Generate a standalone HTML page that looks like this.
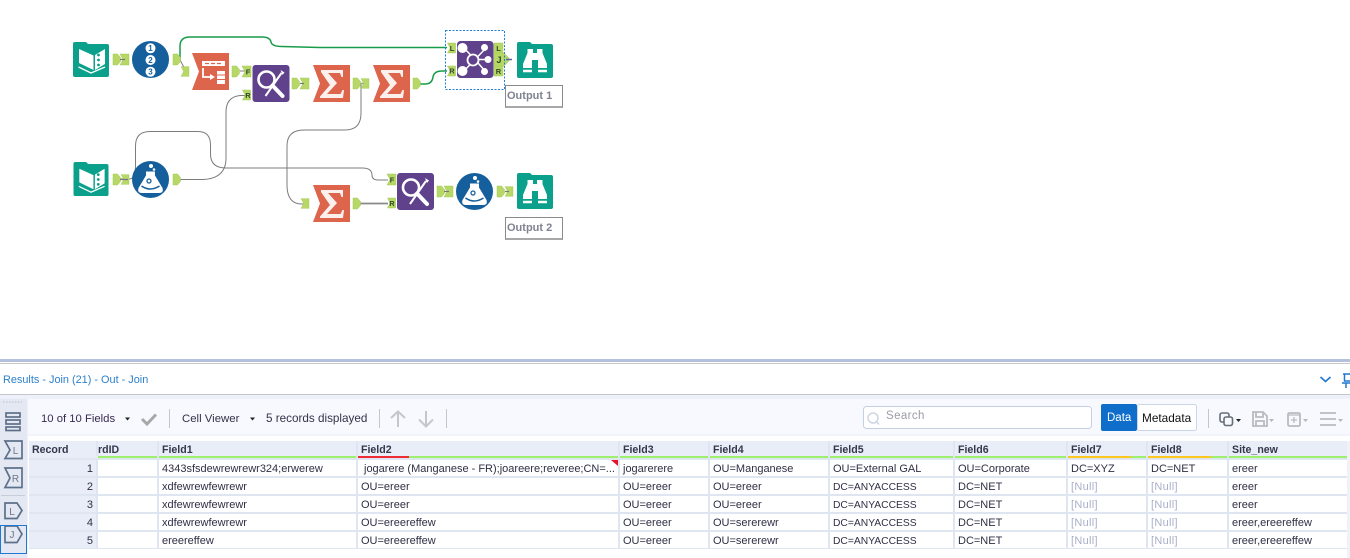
<!DOCTYPE html>
<html><head><meta charset="utf-8"><style>
html,body{margin:0;padding:0;background:#fff;width:1350px;height:558px;overflow:hidden;font-family:"Liberation Sans",sans-serif}
.a{position:absolute}
.t{position:absolute;white-space:nowrap;font-size:11.5px;color:#33334a;line-height:14px}
.c{position:absolute;height:16px;background:#fff;font-size:11px;line-height:19px;color:#2f2f45;white-space:nowrap;overflow:hidden;padding-left:3px;box-sizing:border-box}
.d{font-size:10.3px}
.h{position:absolute;top:441px;height:15px;background:#e9edf7;font-size:10.6px;font-weight:bold;line-height:19px;color:#33384c;white-space:nowrap;overflow:hidden;padding-left:3px;box-sizing:border-box}
.n{color:#a9afc8;letter-spacing:.3px}
.r{background:#e9edf7;text-align:right;padding-right:3px}
.g{position:absolute;top:456px;height:2px;background:#9df06e}
.y{position:absolute;top:456px;height:2px}
.lb{position:absolute;width:56px;height:20px;border:1px solid #8a8a8a;border-bottom:2px solid #a8a8a8;box-sizing:content-box;background:#fff;color:#7f8391;font-size:11px;font-weight:bold;line-height:20px;text-indent:1px;white-space:nowrap}
</style></head><body>
<svg class="a" style="left:0;top:0" width="1350" height="360" viewBox="0 0 1350 360">
<defs>
<symbol id="book" viewBox="0 0 36 36" overflow="visible"><path d="M2 0H13L15 2H34Q36 2 36 4V33Q36 35 34 35H2Q0 35 0 33V2Q0 0 2 0Z" fill="#0ba08b"/><path d="M6 7L20.500 13.500V28L6 21Z" fill="#fff"/><path d="M32 7L22 13V28L32 22Z" fill="#fff"/><path d="M5.500 25L18 31L32 25" fill="none" stroke="#fff" stroke-width="1.300"/><circle cx="25.500" cy="13" r="1.400" fill="#0ba08b"/><circle cx="25.500" cy="18" r="1.400" fill="#0ba08b"/><circle cx="25.500" cy="23" r="1.400" fill="#0ba08b"/></symbol>
<symbol id="bino" viewBox="0 0 36 36" overflow="visible"><path d="M2 0H13L15 2H34Q36 2 36 4V34Q36 36 34 36H2Q0 36 0 34V2Q0 0 2 0Z" fill="#0ba08b"/><path d="M10.500 7H16V11H20V7H25.500V11L30 22V26H21V18H15V26H6V22L10.500 11Z" fill="#fff"/><path d="M6 29H15M21 29H30" stroke="#fff" stroke-width="2.600"/></symbol>
<symbol id="sum" viewBox="0 0 37 37" overflow="visible"><path d="M0 0H37V37H0L7 18.500Z" fill="#dc654c"/><path d="M8 5H30V12H28.500L27 8H15L24 18L14 29H27.500L29.500 25H31L30 33H7V31.500L17 20L8 7Z" fill="#fff" opacity=".9"/></symbol>
<symbol id="filt" viewBox="0 0 37 37" overflow="visible"><rect width="37" height="37" rx="3" fill="#5f418c"/><circle cx="14" cy="14.500" r="8" fill="none" stroke="#fff" stroke-width="2.600"/><path d="M20 20.500L30 31" stroke="#fff" stroke-width="4" stroke-linecap="round"/><path d="M29 8L13 31" stroke="#fff" stroke-width="2"/><path d="M28 5L32 7.500L30 10Z" fill="#fff"/></symbol>
<symbol id="flask" viewBox="0 0 37 37" overflow="visible"><circle cx="18.500" cy="18.500" r="18.500" fill="#155f9c"/><path d="M14 10.500H23V14.500L30.500 27Q32 32 27 32H10Q5 32 6.500 27L14 14.500Z" fill="#fff"/><path d="M9.500 25Q18 31 27.500 25" fill="none" stroke="#155f9c" stroke-width="1.500"/><circle cx="17" cy="20" r="2" fill="none" stroke="#155f9c" stroke-width="1.300"/><circle cx="19" cy="5" r="2" fill="#fff"/><circle cx="22" cy="8.500" r="1.300" fill="#fff"/></symbol>
<symbol id="out" viewBox="0 0 8 11" overflow="visible"><path d="M0 0H4.500L7.500 3.500V7.500L4.500 11H0Z" fill="#b7d767" stroke="#a5c958" stroke-width=".5"/></symbol>
<symbol id="inp" viewBox="0 0 9 11" overflow="visible"><path d="M0 0H9V11H0L3 5.500Z" fill="#b7d767" stroke="#a5c958" stroke-width=".5"/></symbol>
</defs>
<!-- connectors -->
<g fill="none" stroke="#7c7c7c" stroke-width="1">
<path d="M180 60L186 71"/>
<path d="M240 71H245"/>
<path d="M180 179.500H202Q226 179 226 158V112Q226 97 240 95.500H245"/>
<path d="M120 179H130Q135.500 178 135.500 165V146Q135.500 131.500 150 131.500H198Q210.500 131.500 210.500 145V154Q210.500 168 226 168H362Q372 168 372 175Q372 180 378 180H388"/>
<path d="M361 84V113Q361 130 345 130H304Q287 130 287 146V185Q287 204 302 204H306"/>
<path d="M360 203.500H388" stroke="#8a8a8a" stroke-width="1.800"/>
<path d="M360 83.500H366" stroke="#999" stroke-width="1.500"/>
</g>
<g fill="none" stroke="#179c4a" stroke-width="1.500">
<path d="M180 60V46Q180 37 190 37H262Q270 37 271 42Q272 46.500 282 46.500Q300 47 320 47.500H447"/>
<path d="M420 84H425Q432 84 433 77Q434 71 442 71H447"/>
</g>
<!-- anchors -->
<use href="#out" x="113" y="54" width="8" height="11"/><use href="#inp" x="120" y="54" width="9" height="11"/>
<use href="#out" x="173" y="54" width="8" height="11"/><use href="#inp" x="181" y="66" width="8" height="11"/>
<use href="#out" x="232" y="66" width="8" height="11"/><use href="#inp" x="241" y="66" width="11" height="11"/><use href="#inp" x="241" y="90" width="11" height="10"/>
<use href="#out" x="292" y="78" width="8" height="11"/><use href="#inp" x="300" y="78" width="9" height="11"/>
<use href="#out" x="353" y="78" width="8" height="11"/><use href="#inp" x="361" y="78" width="8" height="11"/>
<use href="#out" x="413" y="78" width="8" height="11"/>
<use href="#inp" x="446" y="43" width="11" height="10"/><use href="#inp" x="446" y="66" width="11" height="10"/>
<path d="M494 43H503V53H494ZM494 66H503V76H494Z" fill="#b7d767" stroke="#a5c958" stroke-width=".5"/>
<path d="M494 53H504L509 58V61L504 66H494Z" fill="#b7d767" stroke="#a5c958" stroke-width=".5"/>
<path d="M506 59.500H512" stroke="#5a62a8" stroke-width="1.500"/>
<use href="#out" x="113" y="174" width="8" height="11"/><use href="#inp" x="121" y="174" width="8" height="11"/>
<use href="#out" x="173" y="174" width="8" height="11"/>
<use href="#inp" x="301" y="198" width="8" height="11"/><use href="#out" x="353" y="198" width="8" height="11"/>
<use href="#inp" x="386" y="174" width="11" height="11"/><use href="#inp" x="386" y="198" width="11" height="10"/>
<use href="#out" x="437" y="186" width="8" height="11"/><use href="#inp" x="444" y="186" width="9" height="11"/>
<use href="#out" x="497" y="186" width="8" height="11"/><use href="#inp" x="505" y="186" width="8" height="11"/>
<path d="M300 83.500H304M444 191.500H449M505 191.500H509M120 59.500H125M120 179.500H128" stroke="#777" stroke-width="1.200"/>
<!-- tools -->
<use href="#book" x="73" y="42" width="36" height="36"/>
<circle cx="150.500" cy="59.500" r="18.500" fill="#155f9c"/>
<g fill="#fff"><circle cx="150.500" cy="48.300" r="5"/><circle cx="150.500" cy="60" r="5"/><circle cx="150.500" cy="71.700" r="5"/></g>
<g fill="#155f9c" font-family="Liberation Sans" font-size="8" font-weight="bold" text-anchor="middle"><text x="150.500" y="51">1</text><text x="150.500" y="62.800">2</text><text x="150.500" y="74.500">3</text></g>
<path d="M192 53H229V90H192L199 71.500Z" fill="#dc654c"/>
<path d="M202 61H225V66H202Z" fill="#fff"/><path d="M205 63.500H209M211 63.500H215M217 63.500H221" stroke="#dc654c" stroke-width="1.300"/>
<path d="M203 68V77H211" fill="none" stroke="#fff" stroke-width="1.800"/><path d="M210 74L215 77L210 80Z" fill="#fff"/>
<path d="M217 71H225V84H217Z" fill="#fff"/><path d="M217 75H225M217 79.500H225" stroke="#dc654c" stroke-width="1.100"/>
<use href="#filt" x="252.500" y="65" width="37" height="37"/>
<use href="#sum" x="313" y="65" width="37" height="37"/>
<use href="#sum" x="373" y="65" width="37" height="37"/>
<rect x="457" y="41" width="36.500" height="37" rx="3.500" fill="#5f418c"/>
<g stroke="#fff" stroke-width="1.500"><path d="M463 47L475 59.500M487 47L475 59.500M463 72L475 59.500M485 71L475 59.500M490 59.500H475"/></g>
<circle cx="473" cy="60" r="5.500" fill="#5f418c" stroke="#fff" stroke-width="1.800"/>
<g fill="#fff"><circle cx="462.500" cy="48" r="5"/><circle cx="484.500" cy="47.500" r="3.500"/><circle cx="488" cy="59.500" r="3.500"/><circle cx="462.500" cy="71" r="5"/><circle cx="484.500" cy="71.500" r="3.500"/></g>
<rect x="445.500" y="30.500" width="59" height="59" fill="none" stroke="#1f7fd6" stroke-width="1" stroke-dasharray="2 1.500"/>
<use href="#bino" x="517" y="42" width="36" height="36"/>
<use href="#book" x="73" y="162" width="36" height="35"/>
<use href="#flask" x="132" y="161" width="37" height="37"/>
<use href="#sum" x="313" y="185" width="37" height="37"/>
<use href="#filt" x="397" y="173" width="37" height="37"/>
<use href="#flask" x="456" y="173" width="37" height="37"/>
<use href="#bino" x="517" y="173" width="36" height="36"/>
<g font-family="Liberation Sans" font-size="7.500" font-weight="bold" fill="#2c4a22" text-anchor="middle">
<text x="248" y="74.500">F</text><text x="248" y="98">R</text><text x="452" y="51">L</text><text x="452" y="73.500">R</text><text x="498.500" y="51">L</text><text x="499" y="62.800" font-size="9">J</text><text x="498.500" y="74">R</text><text x="392" y="182.500">F</text><text x="392" y="206">R</text>
</g>
</svg>
<div class="lb" style="left:505px;top:85px">Output 1</div>
<div class="lb" style="left:505px;top:217px">Output 2</div>

<!-- results panel -->
<div class="a" style="left:0;top:359px;width:1350px;height:3px;background:#b3c1de"></div>
<div class="a" style="left:0;top:363px;width:1350px;height:1px;background:#c8c8cc"></div>
<div class="t" style="left:3px;top:373px;color:#2c80cc;font-size:10.900px">Results - Join (21) - Out - Join</div>
<svg class="a" style="left:1318px;top:372px" width="32" height="16"><path d="M2.500 5L7.500 9.500L12.500 5" fill="none" stroke="#1f78d1" stroke-width="1.600"/><path d="M25 2H32M26.500 2V9H32M24 11H32M28 11V16" fill="none" stroke="#1f78d1" stroke-width="1.500"/></svg>
<div class="a" style="left:0;top:394px;width:1350px;height:1px;background:#c4c6cc"></div>
<div class="a" style="left:0;top:395px;width:1350px;height:163px;background:#eef1f9"></div>
<div class="a" style="left:28px;top:399px;width:1322px;height:35px;background:#f7f9fe"></div>
<div class="a" style="left:28px;top:434px;width:1322px;height:2px;background:#f2f4f9"></div>
<div class="a" style="left:0;top:399px;width:27px;height:159px;background:#e3e8f3"></div>
<div class="a" style="left:28px;top:436px;width:1322px;height:122px;background:#fff"></div>
<svg class="a" style="left:0;top:399px" width="27" height="159" viewBox="0 399 27 159">
<path d="M3 402H22" stroke="#c1c6d2" stroke-width="1.300" stroke-dasharray="1.500 1.500"/>
<g fill="none" stroke="#5d7089" stroke-width="1.700">
<rect x="6" y="413" width="14" height="4"/><rect x="6" y="420" width="14" height="4"/><rect x="6" y="427" width="14" height="3.500"/>
<path d="M5 441H22V458.500H5L10 450Z"/><path d="M5 468H22V487.500H5L10 478Z"/>
<path d="M5 503H17L22 510.500L17 518.500H5Z"/><path d="M5 526H17L22 534L17 542.500H5Z"/>
</g>
<path d="M1 495.500H25" stroke="#bfc4cf" stroke-width=".7"/>
<rect x="0.500" y="525.500" width="26" height="28" fill="none" stroke="#1f78d1" stroke-width="1"/>
<g font-family="Liberation Sans" font-size="10" fill="#6e7587" text-anchor="middle"><text x="15.500" y="454">L</text><text x="15.500" y="482">R</text><text x="12" y="515">L</text><text x="12" y="538">J</text></g>
</svg>

<!-- toolbar -->
<svg class="a" style="left:0;top:395px" width="1350" height="45" viewBox="0 395 1350 45">
<path d="M125 417.500H130L127.500 420.500Z M250 417.500H255L252.500 420.500Z" fill="#222"/>
<path d="M142 419L147 424L156 414.500" fill="none" stroke="#a8a8a8" stroke-width="3"/>
<path d="M169.500 409V428M379.500 409V428M446.500 409V428M1208.500 409V428" stroke="#c6c6c6"/>
<g fill="none" stroke="#c4c6ca" stroke-width="2"><path d="M398 427V412M391 418L398 411.500L405 418"/><path d="M426 411V426M419 419.500L426 426.500L433 419.500"/></g>
<rect x="863.500" y="406.500" width="228" height="22" rx="3" fill="#fff" stroke="#c5cfe2"/>
<circle cx="873" cy="418" r="5" fill="none" stroke="#cfd6e3" stroke-width="1.500"/><path d="M876.500 421.500L879 424.500" stroke="#cfd6e3" stroke-width="1.500"/>
<rect x="1137.500" y="404.500" width="59" height="26" rx="2" fill="#fff" stroke="#cbd5e8"/>
<rect x="1101" y="404" width="36" height="27" rx="2" fill="#0f6ec9"/>
<g fill="none" stroke="#666e78" stroke-width="1.600"><rect x="1220" y="413" width="9" height="9" rx="2"/><rect x="1224" y="417" width="8.500" height="8.500" rx="2" fill="#f7f9fe"/></g>
<path d="M1236 419H1241L1238.500 422Z" fill="#222"/>
<g fill="none" stroke="#b8bbc0" stroke-width="1.800"><path d="M1253 412H1263L1267 416V426H1253Z"/><path d="M1256 412V417H1263V412M1256 426V421H1264V426"/><rect x="1288" y="413" width="12" height="13" rx="1.500"/><path d="M1294 417V423M1291 420H1297M1288 415H1300" stroke-width="1.300"/><path d="M1320 413H1336M1320 419H1336M1320 425H1336"/></g>
<path d="M1269 419H1274L1271.500 422ZM1303 419H1308L1305.500 422ZM1338 419H1343L1340.500 422Z" fill="#b5b8bd"/>
</svg>
<div class="t" style="left:41px;top:412px;color:#3a2a50;font-size:11.300px">10 of 10 Fields</div>
<div class="t" style="left:182px;top:412px;font-size:11.400px">Cell Viewer</div>
<div class="t" style="left:266px;top:412px;font-size:11.700px">5 records displayed</div>
<div class="t" style="left:886px;top:409px;color:#9a9da6;font-size:11.500px;letter-spacing:.4px">Search</div>
<div class="t" style="left:1107px;top:411px;color:#fff;font-size:11.500px">Data</div>
<div class="t" style="left:1142px;top:411px;color:#111;font-size:11.800px">Metadata</div>

<!-- grid -->
<div class="a" style="left:29px;top:441px;width:1318px;height:108px;background:#e0e5f2"></div>
<div class="a" style="left:1347px;top:441px;width:3px;height:117px;background:#f0f2f8"></div>
<div class="h" style="left:29px;width:67px">Record</div>
<div class="h" style="left:98px;width:59px;padding-left:0">rdID</div>
<div class="h" style="left:159px;width:197px">Field1</div>
<div class="h" style="left:358px;width:260px">Field2</div>
<div class="h" style="left:620px;width:88px">Field3</div>
<div class="h" style="left:710px;width:118px">Field4</div>
<div class="h" style="left:830px;width:123px">Field5</div>
<div class="h" style="left:955px;width:111px">Field6</div>
<div class="h" style="left:1068px;width:78px">Field7</div>
<div class="h" style="left:1148px;width:79px">Field8</div>
<div class="h" style="left:1229px;width:118px">Site_new</div>
<div class="a" style="left:29px;top:456px;width:69px;height:2px;background:#e9edf7"></div>
<div class="g" style="left:98px;width:59px"></div><div class="g" style="left:159px;width:197px"></div><div class="g" style="left:358px;width:260px"></div><div class="g" style="left:620px;width:88px"></div><div class="g" style="left:710px;width:118px"></div><div class="g" style="left:830px;width:123px"></div><div class="g" style="left:955px;width:111px"></div><div class="g" style="left:1068px;width:78px"></div><div class="g" style="left:1148px;width:79px"></div><div class="g" style="left:1229px;width:118px"></div>
<div class="y" style="left:358px;width:51px;background:#ef2b36"></div>
<div class="y" style="left:1068px;width:63px;background:#fdc81e"></div>
<div class="y" style="left:1148px;width:63px;background:#fdc81e"></div>

<!-- row 1 -->
<div class="c r" style="left:29px;top:460px;width:67px">1</div><div class="c" style="left:98px;top:460px;width:59px"></div><div class="c" style="left:159px;top:460px;width:197px">4343sfsdewrewrewr324;erwerew</div><div class="c" style="left:358px;top:460px;width:260px;padding-left:6px">jogarere (Manganese - FR);joareere;reveree;CN=...</div><div class="c" style="left:620px;top:460px;width:88px">jogarerere</div><div class="c" style="left:710px;top:460px;width:118px">OU=Manganese</div><div class="c" style="left:830px;top:460px;width:123px">OU=External GAL</div><div class="c" style="left:955px;top:460px;width:111px">OU=Corporate</div><div class="c" style="left:1068px;top:460px;width:78px">DC=XYZ</div><div class="c" style="left:1148px;top:460px;width:79px">DC=NET</div><div class="c" style="left:1229px;top:460px;width:118px">ereer</div>
<!-- row 2 -->
<div class="c r" style="left:29px;top:478px;width:67px">2</div><div class="c" style="left:98px;top:478px;width:59px"></div><div class="c" style="left:159px;top:478px;width:197px">xdfewrewfewrewr</div><div class="c" style="left:358px;top:478px;width:260px">OU=ereer</div><div class="c" style="left:620px;top:478px;width:88px">OU=ereer</div><div class="c" style="left:710px;top:478px;width:118px">OU=ereer</div><div class="c d" style="left:830px;top:478px;width:123px">DC=ANYACCESS</div><div class="c" style="left:955px;top:478px;width:111px">DC=NET</div><div class="c n" style="left:1068px;top:478px;width:78px">[Null]</div><div class="c n" style="left:1148px;top:478px;width:79px">[Null]</div><div class="c" style="left:1229px;top:478px;width:118px">ereer</div>
<!-- row 3 -->
<div class="c r" style="left:29px;top:496px;width:67px">3</div><div class="c" style="left:98px;top:496px;width:59px"></div><div class="c" style="left:159px;top:496px;width:197px">xdfewrewfewrewr</div><div class="c" style="left:358px;top:496px;width:260px">OU=ereer</div><div class="c" style="left:620px;top:496px;width:88px">OU=ereer</div><div class="c" style="left:710px;top:496px;width:118px">OU=ereer</div><div class="c d" style="left:830px;top:496px;width:123px">DC=ANYACCESS</div><div class="c" style="left:955px;top:496px;width:111px">DC=NET</div><div class="c n" style="left:1068px;top:496px;width:78px">[Null]</div><div class="c n" style="left:1148px;top:496px;width:79px">[Null]</div><div class="c" style="left:1229px;top:496px;width:118px">ereer</div>
<!-- row 4 -->
<div class="c r" style="left:29px;top:514px;width:67px">4</div><div class="c" style="left:98px;top:514px;width:59px"></div><div class="c" style="left:159px;top:514px;width:197px">xdfewrewfewrewr</div><div class="c" style="left:358px;top:514px;width:260px">OU=ereereffew</div><div class="c" style="left:620px;top:514px;width:88px">OU=ereer</div><div class="c" style="left:710px;top:514px;width:118px">OU=sererewr</div><div class="c d" style="left:830px;top:514px;width:123px">DC=ANYACCESS</div><div class="c" style="left:955px;top:514px;width:111px">DC=NET</div><div class="c n" style="left:1068px;top:514px;width:78px">[Null]</div><div class="c n" style="left:1148px;top:514px;width:79px">[Null]</div><div class="c" style="left:1229px;top:514px;width:118px">ereer,ereereffew</div>
<!-- row 5 -->
<div class="c r" style="left:29px;top:532px;width:67px">5</div><div class="c" style="left:98px;top:532px;width:59px"></div><div class="c" style="left:159px;top:532px;width:197px">ereereffew</div><div class="c" style="left:358px;top:532px;width:260px">OU=ereereffew</div><div class="c" style="left:620px;top:532px;width:88px">OU=ereer</div><div class="c" style="left:710px;top:532px;width:118px">OU=sererewr</div><div class="c d" style="left:830px;top:532px;width:123px">DC=ANYACCESS</div><div class="c" style="left:955px;top:532px;width:111px">DC=NET</div><div class="c n" style="left:1068px;top:532px;width:78px">[Null]</div><div class="c n" style="left:1148px;top:532px;width:79px">[Null]</div><div class="c" style="left:1229px;top:532px;width:118px">ereer,ereereffew</div>
<svg class="a" style="left:611px;top:460px" width="8" height="7"><path d="M0 0H7V6Z" fill="#e8102a"/></svg>
</body></html>
